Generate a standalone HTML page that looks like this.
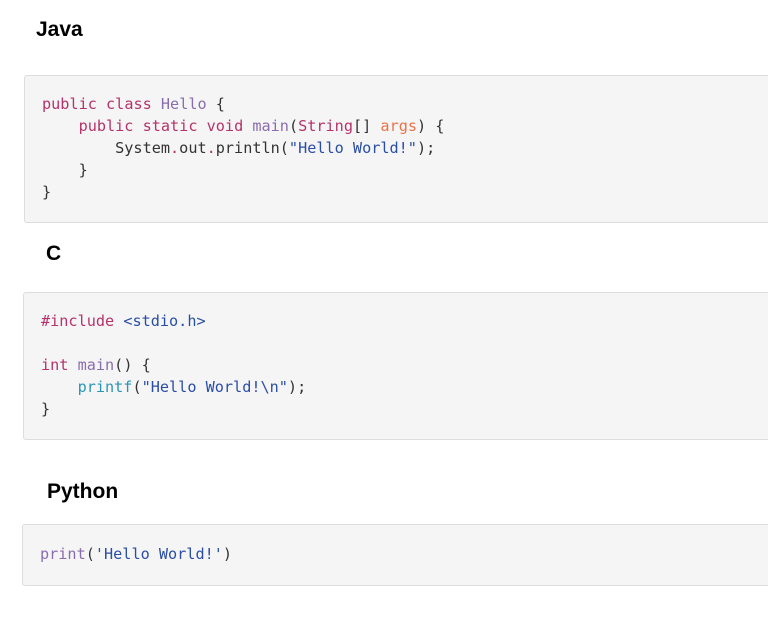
<!DOCTYPE html>
<html><head><style>
body{margin:0;width:768px;height:635px;background:#fff;overflow:hidden;position:relative;font-family:"Liberation Sans",sans-serif}
h2{position:absolute;margin:0;font-size:21px;font-weight:bold;color:#000;line-height:24px}
.box{position:absolute;left:24px;width:800px;background:#f5f5f5;border:1px solid #ddd;border-radius:3px;box-sizing:border-box}
pre{position:absolute;margin:0;font-family:"DejaVu Sans Mono","Liberation Mono",monospace;font-size:15.2px;line-height:22px;color:#333}
.k{color:#b5336b}.t{color:#8a6db0}.s{color:#2a4ea6}.a{color:#e8734a}.f{color:#2a96b5}
</style></head><body>
<h2 style="left:36px;top:18px">Java</h2>
<div class="box" style="top:75px;height:148px"></div>
<pre style="left:42px;top:93px"><span class="k">public</span> <span class="k">class</span> <span class="t">Hello</span> {
    <span class="k">public</span> <span class="k">static</span> <span class="k">void</span> <span class="t">main</span>(<span class="k">String</span>[] <span class="a">args</span>) {
        System<span class="k">.</span>out<span class="k">.</span>println(<span class="s">"Hello World!"</span>);
    }
}</pre>
<h2 style="left:46px;top:242px">C</h2>
<div class="box" style="left:23px;top:292px;height:148px"></div>
<pre style="left:41px;top:310px"><span class="k">#include</span> <span class="s">&lt;stdio.h&gt;</span>

<span class="k">int</span> <span class="t">main</span>() {
    <span class="f">printf</span>(<span class="s">"Hello World!\n"</span>);
}</pre>
<h2 style="left:47px;top:480px">Python</h2>
<div class="box" style="left:22px;top:524px;height:62px"></div>
<pre style="left:40px;top:543px"><span class="t">print</span>(<span class="s">'Hello World!'</span>)</pre>
</body></html>
